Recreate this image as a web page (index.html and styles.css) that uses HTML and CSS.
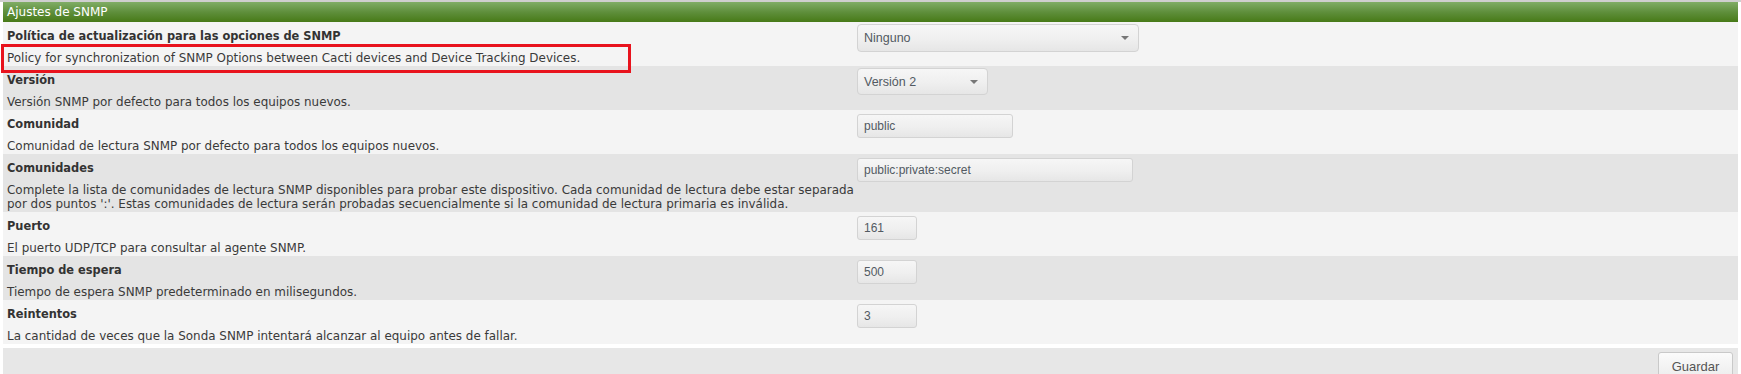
FILE: index.html
```html
<!DOCTYPE html>
<html lang="es">
<head>
<meta charset="utf-8">
<title>Ajustes de SNMP</title>
<link rel="stylesheet" href="styles.css">
</head>
<body>
<div class="topline"></div>
<div class="panel">
  <div class="panel-head">Ajustes de SNMP</div>

  <div class="row light">
    <div class="cell-left">
      <div class="fname">Política de actualización para las opciones de SNMP</div>
      <div class="fdesc">Policy for synchronization of SNMP Options between Cacti devices and Device Tracking Devices.</div>
    </div>
    <div class="cell-right">
      <div class="select sel-policy">Ninguno<span class="caret"></span></div>
    </div>
  </div>

  <div class="row dark">
    <div class="cell-left">
      <div class="fname">Versión</div>
      <div class="fdesc">Versión SNMP por defecto para todos los equipos nuevos.</div>
    </div>
    <div class="cell-right">
      <div class="select sel-version">Versión 2<span class="caret"></span></div>
    </div>
  </div>

  <div class="row light">
    <div class="cell-left">
      <div class="fname">Comunidad</div>
      <div class="fdesc">Comunidad de lectura SNMP por defecto para todos los equipos nuevos.</div>
    </div>
    <div class="cell-right">
      <div class="input in-community">public</div>
    </div>
  </div>

  <div class="row dark">
    <div class="cell-left">
      <div class="fname">Comunidades</div>
      <div class="fdesc">Complete la lista de comunidades de lectura SNMP disponibles para probar este dispositivo. Cada comunidad de lectura debe estar separada<br>por dos puntos ':'. Estas comunidades de lectura serán probadas secuencialmente si la comunidad de lectura primaria es inválida.</div>
    </div>
    <div class="cell-right">
      <div class="input in-communities">public:private:secret</div>
    </div>
  </div>

  <div class="row light">
    <div class="cell-left">
      <div class="fname">Puerto</div>
      <div class="fdesc">El puerto UDP/TCP para consultar al agente SNMP.</div>
    </div>
    <div class="cell-right">
      <div class="input in-small">161</div>
    </div>
  </div>

  <div class="row dark">
    <div class="cell-left">
      <div class="fname">Tiempo de espera</div>
      <div class="fdesc">Tiempo de espera SNMP predeterminado en milisegundos.</div>
    </div>
    <div class="cell-right">
      <div class="input in-small">500</div>
    </div>
  </div>

  <div class="row light">
    <div class="cell-left">
      <div class="fname">Reintentos</div>
      <div class="fdesc">La cantidad de veces que la Sonda SNMP intentará alcanzar al equipo antes de fallar.</div>
    </div>
    <div class="cell-right">
      <div class="input in-small">3</div>
    </div>
  </div>

  <div class="footer">
    <button class="btn" type="button">Guardar</button>
  </div>
</div>
<div class="annot"></div>
</body>
</html>
```

FILE: styles.css
```css
html, body {
  margin: 0;
  padding: 0;
  background: #ffffff;
  overflow: hidden;
}

body {
  font-family: "DejaVu Sans", Verdana, sans-serif;
  font-size: 11.95px;
  color: #333333;
  position: relative;
  height: 374px;
}

.topline {
  height: 2px;
  background: #cfcfcf;
}

.panel {
  margin: 0 3px;
}

.panel-head {
  height: 20px;
  line-height: 20px;
  padding-left: 4px;
  color: #ffffff;
  font-size: 12px;
  background: linear-gradient(to bottom, #80ad66 0%, #5f8f3c 50%, #477a17 100%);
}

.row {
  display: flex;
  align-items: flex-start;
}

.row.light {
  background: #f4f4f4;
}

.row.dark {
  background: #e4e4e4;
}

.cell-left {
  width: 846px;
  padding: 4px 4px 1px 4px;
  flex: none;
}

.fname {
  font-weight: bold;
  font-size: 11.4px;
  line-height: 20px;
  color: #333333;
}

.fdesc {
  margin-top: 5px;
  line-height: 14px;
  color: #3a3a3a;
  white-space: nowrap;
}

.cell-right {
  padding-top: 2px;
  flex: 1;
}

.select,
.input {
  box-sizing: border-box;
  position: relative;
  font-family: "Liberation Sans", Arial, sans-serif;
  font-size: 12.5px;
  color: #525a62;
  border: 1px solid #d3d3d3;
  border-radius: 4px;
  background: linear-gradient(to bottom, #f6f6f6 0%, #efefef 55%, #e6e6e6 100%);
  padding-left: 6px;
  display: flex;
  align-items: center;
}

.sel-policy {
  width: 282px;
  height: 28px;
}

.sel-version {
  width: 131px;
  height: 27px;
}

.caret {
  position: absolute;
  right: 9px;
  top: 50%;
  margin-top: -2px;
  width: 0;
  height: 0;
  border-left: 4px solid transparent;
  border-right: 4px solid transparent;
  border-top: 4px solid #777777;
}

.input {
  margin-top: 2px;
  height: 24px;
  border-radius: 3px;
  font-size: 12px;
}

.in-community {
  width: 156px;
}

.in-communities {
  width: 276px;
}

.in-small {
  width: 60px;
}

.footer {
  margin-top: 4px;
  height: 26px;
  background: #e7e7e7;
  display: flex;
  justify-content: flex-end;
  align-items: flex-start;
  padding: 4px 5px 0 0;
  box-sizing: border-box;
  overflow: hidden;
}

.btn {
  width: 75px;
  height: 28px;
  flex: none;
  font-family: "Liberation Sans", Arial, sans-serif;
  font-size: 13px;
  color: #555555;
  border: 1px solid #c9c9c9;
  border-radius: 3px;
  background: linear-gradient(to bottom, #fbfbfb 0%, #ececec 100%);
  padding: 0;
}

.annot {
  position: absolute;
  left: 1px;
  top: 44px;
  width: 630px;
  height: 29px;
  box-sizing: border-box;
  border: 3px solid #e8131d;
  pointer-events: none;
}
```
